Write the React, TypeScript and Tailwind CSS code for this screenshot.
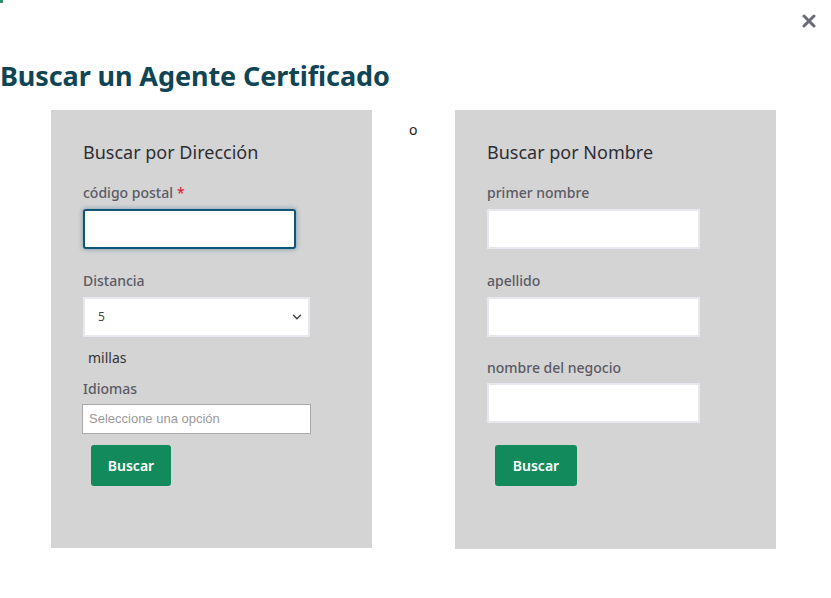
import { ChevronDown } from 'lucide-react'

const font = { fontFamily: '"Noto Sans", "Open Sans", sans-serif' }

function Label({ children, required }: { children: React.ReactNode; required?: boolean }) {
  return (
    <div className="text-[14px] leading-[20px] font-medium text-[#5b5a66]">
      {children}
      {required && <span className="ml-1 text-[#d9263a]">*</span>}
    </div>
  )
}

function TextInput({ focused }: { focused?: boolean }) {
  return (
    <div
      className={`mt-[6px] h-[40px] w-[213px] bg-white ${
        focused
          ? 'rounded-[3px] border-2 border-[#0e5577] shadow-[0_0_4px_1px_rgba(14,85,119,0.35)]'
          : 'border-2 border-[#e8e7ef]'
      }`}
    />
  )
}

function SearchButton({ w }: { w: string }) {
  return (
    <button
      className={`ml-[8px] h-[41px] ${w} rounded-[3px] bg-[#138a5b] text-[14px] font-semibold text-white`}
    >
      Buscar
    </button>
  )
}

export default function App() {
  return (
    <div className="relative h-[598px] w-[831px] overflow-hidden bg-white" style={font}>
      <div className="absolute left-0 top-0 h-[3px] w-[3px] bg-[#2f8f6a]" />
      <button aria-label="Cerrar" className="absolute right-[15px] top-[14px] text-[#6b6a7a]">
        <svg width="14" height="14" viewBox="0 0 14 14" fill="none" stroke="currentColor" strokeWidth="3" strokeLinecap="round">
          <path d="M2 2l10 10M12 2L2 12" />
        </svg>
      </button>

      <h1 className="pt-[58px] text-[27px] leading-[36px] font-bold text-[#0f4555] tracking-[-0.1px]">
        Buscar un Agente Certificado
      </h1>

      <div className="mt-[16px] flex">
        {/* Dirección */}
        <div className="ml-[51px] h-[438px] w-[321px] bg-[#d4d4d4] pl-[32px] pt-[30px]">
          <div className="text-[18px] leading-[24px] text-[#2e2e35]">Buscar por Dirección</div>
          <div className="mt-[19px]">
            <Label required>código postal</Label>
          </div>
          <TextInput focused />
          <div className="mt-[22px]">
            <Label>Distancia</Label>
          </div>
          <div className="mt-[6px] flex h-[40px] w-[227px] items-center justify-between border-2 border-[#e8e7ef] bg-white pl-[13px] pr-[4px]">
            <span className="text-[12px] text-[#444]">5</span>
            <ChevronDown size={14} strokeWidth={2.5} className="text-[#444]" />
          </div>
          <div className="mt-[11px] ml-[5px] text-[14px] leading-[20px] text-[#333]">millas</div>
          <div className="mt-[11px]">
            <Label>Idiomas</Label>
          </div>
          <div
            className="-ml-[1px] mt-[5px] flex h-[30px] w-[229px] items-center border border-[#aaaaaa] bg-white px-[6px] text-[13px] text-[#999]"
            style={{ fontFamily: '"Liberation Sans", Arial, sans-serif' }}
          >
            Seleccione una opción
          </div>
          <div className="mt-[11px]">
            <SearchButton w="w-[80px]" />
          </div>
        </div>

        <div className="w-[83px] pl-[37px] pt-[10px] text-[14px] leading-[20px] text-[#222]">o</div>

        {/* Nombre */}
        <div className="h-[439px] w-[321px] bg-[#d4d4d4] pl-[32px] pt-[30px]">
          <div className="text-[18px] leading-[24px] text-[#2e2e35]">Buscar por Nombre</div>
          <div className="mt-[19px]">
            <Label>primer nombre</Label>
          </div>
          <TextInput />
          <div className="mt-[22px]">
            <Label>apellido</Label>
          </div>
          <TextInput />
          <div className="mt-[21px]">
            <Label>nombre del negocio</Label>
          </div>
          <div className="-mt-[1px]">
            <TextInput />
          </div>
          <div className="mt-[22px]">
            <SearchButton w="w-[82px]" />
          </div>
        </div>
      </div>
    </div>
  )
}
